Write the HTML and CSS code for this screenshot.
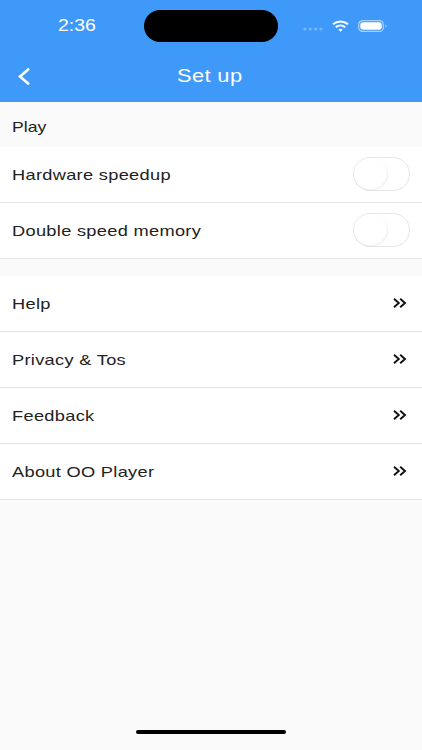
FILE: index.html
```html
<!DOCTYPE html>
<html lang="en">
<head>
<meta charset="utf-8">
<title>Set up</title>
<link rel="stylesheet" href="styles.css">
</head>
<body>
<div class="app">
  <header class="header">
    <div class="status">
      <span class="time"><span class="wide">2:36</span></span>
      <span class="island"></span>
      <span class="status-icons">
        <svg class="signal" width="20" height="4" viewBox="0 0 20 4"><g fill="#fff" fill-opacity=".3"><circle cx="2" cy="2" r="1.600"/><circle cx="7.300" cy="2" r="1.600"/><circle cx="12.700" cy="2" r="1.600"/><circle cx="18" cy="2" r="1.600"/></g></svg>
        <svg class="wifi" width="17" height="12" viewBox="0 0 17 12"><g fill="none" stroke="#fff" stroke-width="2"><path d="M1 4.300C5.300.6 11.700.6 16 4.300"/><path d="M3.800 7.300C6.500 5 10.500 5 13.200 7.300"/></g><path d="M6.300 9.400 8.500 11.800 10.700 9.400C9.400 8.400 7.600 8.400 6.300 9.400Z" fill="#fff"/></svg>
        <svg class="battery" width="29" height="12" viewBox="0 0 29 12"><rect x=".7" y=".7" width="24.600" height="10.600" rx="3.600" fill="none" stroke="#fff" stroke-opacity=".55" stroke-width="1.200"/><rect x="2.300" y="2.300" width="21.400" height="7.400" rx="2.400" fill="#fff"/><path d="M27.400 4.500c.9.200 1.200.8 1.200 1.500s-.3 1.300-1.200 1.500Z" fill="#fff" fill-opacity=".5"/></svg>
      </span>
    </div>
    <div class="nav">
      <svg class="back" width="14" height="19" viewBox="0 0 14 19"><path d="M12 1.800 3 9.500l9 7.700" fill="none" stroke="#fff" stroke-width="2.600"/></svg>
      <h1 class="title"><span class="wide">Set up</span></h1>
    </div>
  </header>

  <main class="content">
    <div class="section-label"><span class="wide">Play</span></div>
    <section class="group">
      <div class="row"><span class="wide">Hardware speedup</span><span class="toggle"><span class="knob"></span></span></div>
      <div class="row"><span class="wide">Double speed memory</span><span class="toggle"><span class="knob"></span></span></div>
    </section>
    <section class="group group-links">
      <div class="row"><span class="wide">Help</span><svg class="chev" width="14" height="10" viewBox="0 0 14 10"><path d="M1 .7 5.800 5 1 9.300M7.200.7 12 5 7.200 9.300" fill="none" stroke="#111" stroke-width="1.900"/></svg></div>
      <div class="row"><span class="wide">Privacy &amp; Tos</span><svg class="chev" width="14" height="10" viewBox="0 0 14 10"><path d="M1 .7 5.800 5 1 9.300M7.200.7 12 5 7.200 9.300" fill="none" stroke="#111" stroke-width="1.900"/></svg></div>
      <div class="row"><span class="wide">Feedback</span><svg class="chev" width="14" height="10" viewBox="0 0 14 10"><path d="M1 .7 5.800 5 1 9.300M7.200.7 12 5 7.200 9.300" fill="none" stroke="#111" stroke-width="1.900"/></svg></div>
      <div class="row"><span class="wide">About OO Player</span><svg class="chev" width="14" height="10" viewBox="0 0 14 10"><path d="M1 .7 5.800 5 1 9.300M7.200.7 12 5 7.200 9.300" fill="none" stroke="#111" stroke-width="1.900"/></svg></div>
    </section>
  </main>

  <div class="home-bar"><span class="home-pill"></span></div>
</div>
</body>
</html>
```

FILE: styles.css
```css
* { box-sizing: border-box; }
html, body { margin: 0; padding: 0; }
body {
  width: 422px;
  height: 750px;
  overflow: hidden;
  background: #fafafa;
  font-family: "Liberation Sans", Arial, sans-serif;
  color: #222;
}
.app {
  height: 750px;
  display: flex;
  flex-direction: column;
}
/* The reference is a device capture stretched horizontally */
.wide {
  display: inline-block;
  transform: scaleX(1.215);
  transform-origin: left center;
  white-space: nowrap;
}
.header {
  height: 102px;
  flex: none;
  background: #3f99f9;
  color: #fff;
  padding-top: 10px;
}
.status {
  display: grid;
  grid-template-columns: 144px 134px 1fr;
  height: 32px;
  align-items: center;
}
.time {
  padding-left: 58px;
  font-size: 16px;
  color: #fff;
}
.island {
  height: 32px;
  background: #000;
  border-radius: 16px;
}
.status-icons {
  display: flex;
  align-items: center;
  padding-left: 25px;
  gap: 9px;
}
.signal { margin-top: 6px; }
.nav {
  display: grid;
  grid-template-columns: 1fr auto 1fr;
  align-items: center;
  height: 60px;
  padding-top: 8px;
}
.back { margin-left: 17px; }
.title {
  margin: 0;
  width: 68px;
  font-size: 18px;
  font-weight: 400;
  letter-spacing: .3px;
  color: #fff;
}
.content { flex: 1; }
.section-label {
  height: 45px;
  padding: 5px 0 0 12px;
  display: flex;
  align-items: center;
  font-size: 14.500px;
  color: #222;
}
.group { background: #fff; }
.group-links { margin-top: 17px; }
.row {
  height: 56px;
  padding: 0 12px 1px;
  display: flex;
  align-items: center;
  justify-content: space-between;
  border-bottom: 1px solid #e6e6e6;
  font-size: 15px;
  letter-spacing: .25px;
  color: #222;
}
.toggle {
  width: 57px;
  height: 34px;
  border: 1.500px solid #e6e6e6;
  border-radius: 17px;
  background: #fff;
  display: flex;
}
.knob {
  width: 33px;
  height: 31px;
  border-radius: 50%;
  background: #fff;
  box-shadow: 1px 1px 2px rgba(0, 0, 0, .07);
}
.chev { margin-right: 3px; flex: none; }
.home-bar {
  flex: none;
  height: 20px;
  display: flex;
  justify-content: center;
}
.home-pill {
  width: 150px;
  height: 4px;
  border-radius: 2px;
  background: #000;
}
```
